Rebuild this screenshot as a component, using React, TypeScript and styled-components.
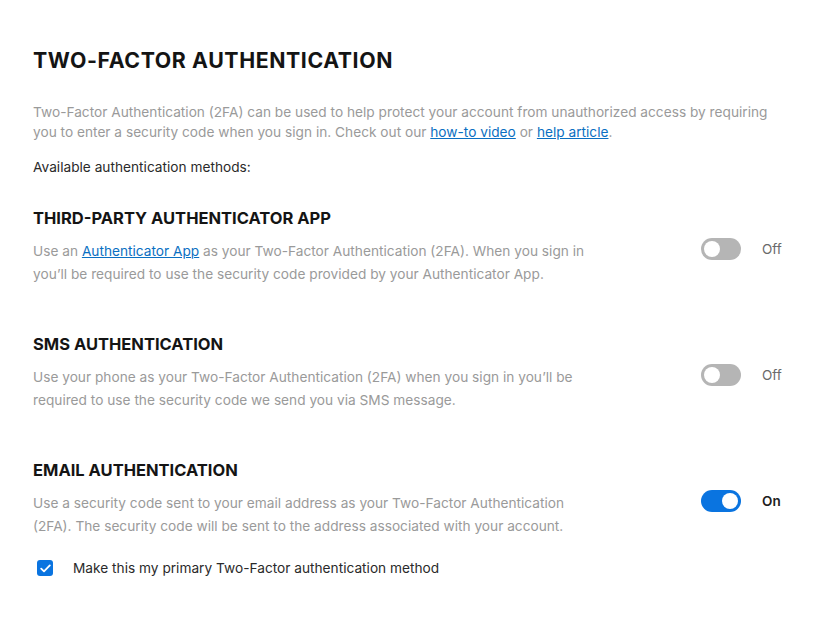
import styled, { createGlobalStyle } from "styled-components";
import { useState } from "react";

const GlobalStyle = createGlobalStyle`
  html, body {
    margin: 0;
    background: #ffffff;
  }
  body {
    font-family: Inter, "Noto Sans", sans-serif;
    color: #202020;
  }
`;

const Page = styled.div`
  box-sizing: border-box;
  width: 834px;
  min-height: 638px;
  padding: 44px 52px 40px 33px;
`;

const Title = styled.h1`
  font-size: 21.3px;
  font-weight: 700;
  letter-spacing: 0.6px;
  line-height: 32px;
  margin: 0 0 26px;
  color: #141414;
`;

const Intro = styled.p`
  font-size: 13.7px;
  line-height: 20px;
  color: #9a9a9a;
  margin: 0 0 15px;
`;

const Link = styled.a`
  color: #0a6fc2;
  text-decoration: underline;
  cursor: pointer;
`;

const Available = styled.p`
  font-size: 13.7px;
  line-height: 20px;
  color: #2a2a2a;
  margin: 0 0 29px;
`;

const Section = styled.section`
  margin-bottom: 46px;
`;

const SectionTitle = styled.h2`
  font-size: 16.5px;
  font-weight: 700;
  line-height: 24px;
  margin: 0 0 10px;
  color: #141414;
`;

const Row = styled.div`
  display: flex;
  align-items: center;
  justify-content: space-between;
`;

const SectionText = styled.p`
  font-size: 13.7px;
  line-height: 23px;
  color: #9a9a9a;
  margin: 0;
  max-width: 560px;
`;

const ToggleWrap = styled.div`
  display: flex;
  align-items: center;
  gap: 21px;
  width: 81px;
  margin-top: -29px;
`;

const Track = styled.button<{ $on: boolean }>`
  position: relative;
  width: 40px;
  height: 22px;
  border: none;
  border-radius: 11px;
  padding: 0;
  cursor: pointer;
  background: ${(p) => (p.$on ? "#0a74e0" : "#b5b5b5")};
`;

const Knob = styled.span<{ $on: boolean }>`
  position: absolute;
  top: 3px;
  left: ${(p) => (p.$on ? "21px" : "3px")};
  width: 16px;
  height: 16px;
  border-radius: 50%;
  background: #ffffff;
`;

const ToggleLabel = styled.span<{ $on: boolean }>`
  font-size: 13.5px;
  color: ${(p) => (p.$on ? "#202020" : "#6a6a6a")};
  font-weight: ${(p) => (p.$on ? 600 : 400)};
`;

const CheckRow = styled.label`
  display: flex;
  align-items: center;
  gap: 20px;
  margin-top: -24px;
  padding-left: 4px;
  font-size: 13.7px;
  color: #2a2a2a;
  cursor: pointer;
`;

const Box = styled.span`
  display: flex;
  align-items: center;
  justify-content: center;
  width: 16px;
  height: 16px;
  border-radius: 3px;
  background: #0a74e0;
`;

function Toggle({ on, onClick }: { on: boolean; onClick: () => void }) {
  return (
    <ToggleWrap>
      <Track $on={on} onClick={onClick} aria-pressed={on}>
        <Knob $on={on} />
      </Track>
      <ToggleLabel $on={on}>{on ? "On" : "Off"}</ToggleLabel>
    </ToggleWrap>
  );
}

export default function App() {
  const [app, setApp] = useState(false);
  const [sms, setSms] = useState(false);
  const [email, setEmail] = useState(true);
  return (
    <Page>
      <GlobalStyle />
      <Title>TWO-FACTOR AUTHENTICATION</Title>
      <Intro>
        Two-Factor Authentication (2FA) can be used to help protect your account
        from unauthorized access by requiring you to enter a security code when
        you sign in. Check out our <Link>how-to video</Link> or{" "}
        <Link>help article</Link>.
      </Intro>
      <Available>Available authentication methods:</Available>

      <Section>
        <SectionTitle>THIRD-PARTY AUTHENTICATOR APP</SectionTitle>
        <Row>
          <SectionText>
            Use an <Link>Authenticator App</Link> as your Two-Factor
            Authentication (2FA). When you sign in you’ll be required to use the
            security code provided by your Authenticator App.
          </SectionText>
          <Toggle on={app} onClick={() => setApp(!app)} />
        </Row>
      </Section>

      <Section>
        <SectionTitle>SMS AUTHENTICATION</SectionTitle>
        <Row>
          <SectionText>
            Use your phone as your Two-Factor Authentication (2FA) when you sign
            in you’ll be required to use the security code we send you via SMS
            message.
          </SectionText>
          <Toggle on={sms} onClick={() => setSms(!sms)} />
        </Row>
      </Section>

      <Section>
        <SectionTitle>EMAIL AUTHENTICATION</SectionTitle>
        <Row>
          <SectionText>
            Use a security code sent to your email address as your Two-Factor
            Authentication (2FA). The security code will be sent to the address
            associated with your account.
          </SectionText>
          <Toggle on={email} onClick={() => setEmail(!email)} />
        </Row>
      </Section>

      <CheckRow>
        <Box>
          <svg width="11" height="9" viewBox="0 0 11 9" fill="none">
            <path
              d="M1.2 4.6 L4 7.3 L9.8 1.4"
              stroke="#ffffff"
              strokeWidth="1.8"
              strokeLinecap="round"
              strokeLinejoin="round"
            />
          </svg>
        </Box>
        Make this my primary Two-Factor authentication method
      </CheckRow>
    </Page>
  );
}
